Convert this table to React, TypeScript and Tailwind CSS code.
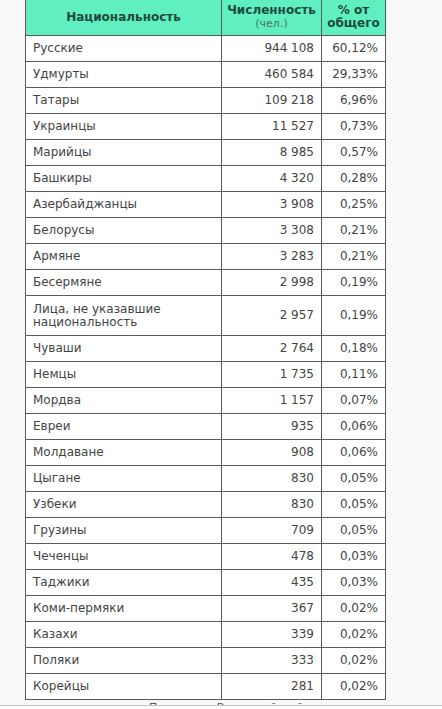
const rows: [string, string, string][] = [
  ['Русские', '944 108', '60,12%'],
  ['Удмурты', '460 584', '29,33%'],
  ['Татары', '109 218', '6,96%'],
  ['Украинцы', '11 527', '0,73%'],
  ['Марийцы', '8 985', '0,57%'],
  ['Башкиры', '4 320', '0,28%'],
  ['Азербайджанцы', '3 908', '0,25%'],
  ['Белорусы', '3 308', '0,21%'],
  ['Армяне', '3 283', '0,21%'],
  ['Бесермяне', '2 998', '0,19%'],
  ['Лица, не указавшие национальность', '2 957', '0,19%'],
  ['Чуваши', '2 764', '0,18%'],
  ['Немцы', '1 735', '0,11%'],
  ['Мордва', '1 157', '0,07%'],
  ['Евреи', '935', '0,06%'],
  ['Молдаване', '908', '0,06%'],
  ['Цыгане', '830', '0,05%'],
  ['Узбеки', '830', '0,05%'],
  ['Грузины', '709', '0,05%'],
  ['Чеченцы', '478', '0,03%'],
  ['Таджики', '435', '0,03%'],
  ['Коми-пермяки', '367', '0,02%'],
  ['Казахи', '339', '0,02%'],
  ['Поляки', '333', '0,02%'],
  ['Корейцы', '281', '0,02%'],
]

export default function App() {
  return (
    <div className="h-[709px] overflow-hidden bg-[#f9f9fc] font-['DejaVu_Sans',Verdana,sans-serif]">
      <div className="h-[705px] overflow-hidden pl-[25px]">
        <table className="w-[360px] table-fixed border-collapse bg-white text-[12px] leading-[13px] text-[#444]">
          <colgroup>
            <col className="w-[196px]" />
            <col className="w-[100px]" />
            <col className="w-[64px]" />
          </colgroup>
          <thead>
            <tr className="h-[35px] bg-[#60efc0] text-[#1d4a3c]">
              <th className="border-x border-b border-[#5a5a5a] py-[4px] text-center font-bold">
                Национальность
              </th>
              <th className="border-x border-b border-[#5a5a5a] py-[4px] text-center font-bold">
                Численность
                <br />
                <span className="font-normal text-[11px] text-[#4f6f64]">(чел.)</span>
              </th>
              <th className="border-x border-b border-[#5a5a5a] py-[4px] text-center font-bold">
                % от
                <br />
                общего
              </th>
            </tr>
          </thead>
          <tbody>
            {rows.map(([name, count, pct]) => {
              const pad = name.length > 20 ? 'pt-[7px] pb-[6px]' : 'py-[6px]'
              return (
                <tr key={name}>
                  <td className={`border border-[#5a5a5a] ${pad} pl-[7px] pr-[4px] text-left`}>{name}</td>
                  <td className={`border border-[#5a5a5a] ${pad} pr-[7px] text-right`}>{count}</td>
                  <td className={`border border-[#5a5a5a] ${pad} pr-[7px] text-right`}>{pct}</td>
                </tr>
              )
            })}
          </tbody>
        </table>
        <div className="mt-[1px] pl-[124px] text-[11px] leading-[13px] text-[#555]">
          По данным Всероссийской переписи населения 2002
        </div>
      </div>
      <div className="h-full border-t border-[#c4c4c4] bg-white" />
    </div>
  )
}
